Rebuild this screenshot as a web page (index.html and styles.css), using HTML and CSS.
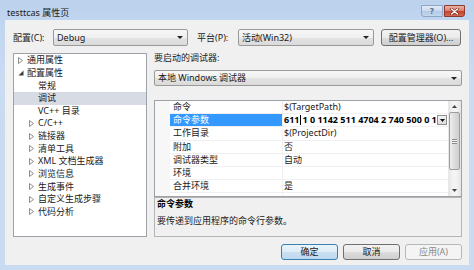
FILE: index.html
```html
<!DOCTYPE html>
<html>
<head>
<meta charset="utf-8">
<title>testtcas 属性页</title>
<link rel="stylesheet" href="styles.css">
</head>
<body>
<div class="window">
  <div class="titlebar">
    <span class="title">testtcas 属性页</span>
    <div class="caption">
      <span class="cap-btn cap-help">?</span>
      <span class="cap-btn cap-close"><svg width="9" height="7" viewBox="0 0 9 7"><path d="M1.5 1L7.5 6M7.5 1L1.5 6" stroke="#6b2a22" stroke-width="2.6" stroke-linecap="round"/><path d="M1.5 1L7.5 6M7.5 1L1.5 6" stroke="#fff" stroke-width="1.4" stroke-linecap="round"/></svg></span>
    </div>
  </div>
  <div class="client">
    <div class="toolbar">
      <span class="lbl lbl-config">配置(C):</span>
      <div class="combo combo-config"><span>Debug</span><svg class="arrow" width="6" height="3" viewBox="0 0 6 3"><path d="M0 0H6L3 3Z" fill="#222"/></svg></div>
      <span class="lbl lbl-platform">平台(P):</span>
      <div class="combo combo-platform"><span>活动(Win32)</span><svg class="arrow" width="6" height="3" viewBox="0 0 6 3"><path d="M0 0H6L3 3Z" fill="#222"/></svg></div>
      <button class="btn btn-manager">配置管理器(O)...</button>
    </div>
    <div class="main">
      <div class="tree">
        <div class="node lv0"><span class="toggle"><svg width="5" height="7" viewBox="0 0 5 7"><path d="M0.5 0.5L4.5 3.5L0.5 6.5Z" fill="#fff" stroke="#8c8c8c"/></svg></span>通用属性</div>
        <div class="node lv0"><span class="toggle"><svg width="6" height="6" viewBox="0 0 6 6"><path d="M5.5 0.5V5.5H0.5Z" fill="#3c3c3c"/></svg></span>配置属性</div>
        <div class="node lv1"><span class="toggle"></span>常规</div>
        <div class="node lv1 selected"><span class="toggle"></span>调试</div>
        <div class="node lv1"><span class="toggle"></span>VC++ 目录</div>
        <div class="node lv1"><span class="toggle"><svg width="5" height="7" viewBox="0 0 5 7"><path d="M0.5 0.5L4.5 3.5L0.5 6.5Z" fill="#fff" stroke="#8c8c8c"/></svg></span>C/C++</div>
        <div class="node lv1"><span class="toggle"><svg width="5" height="7" viewBox="0 0 5 7"><path d="M0.5 0.5L4.5 3.5L0.5 6.5Z" fill="#fff" stroke="#8c8c8c"/></svg></span>链接器</div>
        <div class="node lv1"><span class="toggle"><svg width="5" height="7" viewBox="0 0 5 7"><path d="M0.5 0.5L4.5 3.5L0.5 6.5Z" fill="#fff" stroke="#8c8c8c"/></svg></span>清单工具</div>
        <div class="node lv1"><span class="toggle"><svg width="5" height="7" viewBox="0 0 5 7"><path d="M0.5 0.5L4.5 3.5L0.5 6.5Z" fill="#fff" stroke="#8c8c8c"/></svg></span>XML 文档生成器</div>
        <div class="node lv1"><span class="toggle"><svg width="5" height="7" viewBox="0 0 5 7"><path d="M0.5 0.5L4.5 3.5L0.5 6.5Z" fill="#fff" stroke="#8c8c8c"/></svg></span>浏览信息</div>
        <div class="node lv1"><span class="toggle"><svg width="5" height="7" viewBox="0 0 5 7"><path d="M0.5 0.5L4.5 3.5L0.5 6.5Z" fill="#fff" stroke="#8c8c8c"/></svg></span>生成事件</div>
        <div class="node lv1"><span class="toggle"><svg width="5" height="7" viewBox="0 0 5 7"><path d="M0.5 0.5L4.5 3.5L0.5 6.5Z" fill="#fff" stroke="#8c8c8c"/></svg></span>自定义生成步骤</div>
        <div class="node lv1"><span class="toggle"><svg width="5" height="7" viewBox="0 0 5 7"><path d="M0.5 0.5L4.5 3.5L0.5 6.5Z" fill="#fff" stroke="#8c8c8c"/></svg></span>代码分析</div>
      </div>
      <div class="right">
        <div class="right-label">要启动的调试器:</div>
        <div class="combo combo-debugger"><span>本地 Windows 调试器</span><svg class="arrow" width="6" height="3" viewBox="0 0 6 3"><path d="M0 0H6L3 3Z" fill="#222"/></svg></div>
        <div class="grid">
          <div class="rows">
            <div class="row"><div class="gutter"></div><div class="name">命令</div><div class="value">$(TargetPath)</div></div>
            <div class="row"><div class="gutter"></div><div class="name sel">命令参数</div><div class="value editor"><span class="edit-text">611<i class="caret"></i>1 0 1142 511 4704 2 740 500 0 1</span><span class="dd"><svg width="5" height="3" viewBox="0 0 5 3"><path d="M0 0H5L2.5 3Z" fill="#111"/></svg></span></div></div>
            <div class="row"><div class="gutter"></div><div class="name">工作目录</div><div class="value">$(ProjectDir)</div></div>
            <div class="row"><div class="gutter"></div><div class="name">附加</div><div class="value">否</div></div>
            <div class="row"><div class="gutter"></div><div class="name">调试器类型</div><div class="value">自动</div></div>
            <div class="row"><div class="gutter"></div><div class="name">环境</div><div class="value"></div></div>
            <div class="row"><div class="gutter"></div><div class="name">合并环境</div><div class="value">是</div></div>
            <div class="row"><div class="gutter"></div><div class="name"></div><div class="value"></div></div>
          </div>
          <div class="scrollbar">
            <div class="sb-btn"><svg width="5" height="3" viewBox="0 0 5 3"><path d="M0 3H5L2.5 0Z" fill="#444"/></svg></div>
            <div class="sb-thumb"><span class="grip"></span></div>
            <div class="sb-track"></div>
            <div class="sb-btn"><svg width="5" height="3" viewBox="0 0 5 3"><path d="M0 0H5L2.5 3Z" fill="#444"/></svg></div>
          </div>
        </div>
        <div class="desc">
          <div class="desc-title">命令参数</div>
          <div class="desc-text">要传递到应用程序的命令行参数。</div>
        </div>
      </div>
    </div>
    <div class="footer">
      <button class="btn btn-action btn-default">确定</button>
      <button class="btn btn-action">取消</button>
      <button class="btn btn-action btn-disabled" disabled>应用(A)</button>
    </div>
  </div>
</div>
</body>
</html>
```

FILE: styles.css
```css
* { box-sizing: border-box; }
html, body { margin: 0; padding: 0; }
body {
  width: 474px;
  height: 270px;
  overflow: hidden;
  font-family: "Noto Sans", "Noto Sans CJK SC", sans-serif;
  font-size: 9px;
  color: #1a1a1a;
}
.window {
  width: 474px;
  height: 270px;
  display: flex;
  flex-direction: column;
  background: linear-gradient(#bcd2ed, #cadcf2 30%, #c9dbf1 100%);
}
.titlebar {
  height: 20px;
  display: flex;
  align-items: flex-start;
  justify-content: space-between;
  padding: 5px 9px 0 7px;
}
.title { line-height: 15px; color: #1b1b1b; }
.caption { display: flex; gap: 1px; }
.cap-btn {
  height: 12px;
  display: flex;
  align-items: center;
  justify-content: center;
}
.cap-help {
  width: 22px;
  border: 1px solid #8ea5c5;
  border-radius: 0 0 0 3px;
  background: linear-gradient(#e2ecf8, #c8d9ee 50%, #b4c9e6 51%, #c3d6ee);
  color: #4d6383;
  font-weight: bold;
  font-size: 8px;
  line-height: 10px;
}
.cap-close {
  width: 21px;
  border: 1px solid #8a3a30;
  border-radius: 0 0 3px 0;
  background: linear-gradient(#eab3a5, #dc7d69 50%, #c8402c 51%, #d5664f);
}
.client {
  flex: 1;
  margin: 0 5px 5px 5px;
  background: #f0f0f0;
  display: flex;
  flex-direction: column;
  padding: 9px 7px 5px 8px;
}
.toolbar {
  height: 17px;
  display: flex;
  align-items: center;
}
.lbl { line-height: 12px; white-space: nowrap; }
.lbl-config { width: 40px; }
.lbl-platform { width: 41px; margin-left: 9px; }
.combo {
  height: 17px;
  border: 1px solid #9a9a9a;
  border-radius: 2px;
  background: linear-gradient(#f7f7f7, #efefef 50%, #e3e3e3 51%, #dadada);
  display: flex;
  align-items: center;
  justify-content: space-between;
  padding: 0 4px 0 3px;
  line-height: 12px;
  white-space: nowrap;
}
.combo-config { width: 135px; }
.combo-platform { width: 136px; }
.btn {
  height: 17px;
  border: 1px solid #707070;
  border-radius: 3px;
  background: linear-gradient(#f2f2f2, #ebebeb 50%, #dddddd 51%, #cfcfcf);
  font-family: inherit;
  font-size: 9px;
  color: #1a1a1a;
  padding: 0;
  line-height: 12px;
  white-space: nowrap;
}
.btn-manager { width: 80px; margin-left: 7px; }
.main {
  margin-top: 7px;
  height: 184px;
  display: flex;
  gap: 7px;
}
.tree {
  width: 134px;
  border: 1px solid #9da2a9;
  background: #fff;
  padding-top: 0;
}
.node {
  height: 12.64px;
  display: flex;
  align-items: center;
  line-height: 12px;
  white-space: nowrap;
}
.node.selected { background: #d7dbe3; }
.lv0 { padding-left: 3px; }
.lv1 { padding-left: 14px; }
.toggle {
  width: 7px;
  height: 7px;
  margin-right: 3px;
  display: flex;
  align-items: center;
  justify-content: center;
}
.right {
  flex: 1;
  display: flex;
  flex-direction: column;
}
.right-label { line-height: 10px; height: 10px; }
.combo-debugger { margin-top: 7px; height: 16px; }
.grid {
  margin-top: 14px;
  height: 97px;
  border: 1px solid #9da2a9;
  background: #fff;
  display: flex;
  overflow: hidden;
}
.rows { flex: 1; overflow: hidden; }
.row {
  display: flex;
  height: 13.2px;
  line-height: 12px;
  white-space: nowrap;
}
.gutter { width: 15px; background: #f7f7f7; }
.name {
  width: 113px;
  padding-left: 3px;
  border-right: 1px solid #f0f0f0;
  border-bottom: 1px solid #f0f0f0;
  display: flex;
  align-items: center;
}
.name.sel { background: #3399ff; color: #fff; }
.value {
  flex: 1;
  padding-left: 1px;
  border-bottom: 1px solid #f0f0f0;
  display: flex;
  align-items: center;
  overflow: hidden;
}
.editor { padding-right: 1px; }
.edit-text {
  flex: 1;
  overflow: hidden;
  font-weight: bold;
  color: #000;
  white-space: pre;
}
.caret {
  display: inline-block;
  width: 1px;
  height: 10px;
  margin: 0 1px 0 1px;
  background: #000;
  vertical-align: -2px;
}
.dd {
  width: 10px;
  height: 10px;
  border: 1px solid #8f8f8f;
  background: linear-gradient(#f4f4f4, #dcdcdc);
  display: flex;
  align-items: center;
  justify-content: center;
}
.scrollbar {
  width: 13px;
  background: linear-gradient(90deg, #e6e6e6, #f4f4f4 40%, #f4f4f4 60%, #e6e6e6);
  display: flex;
  flex-direction: column;
}
.sb-btn {
  height: 11px;
  display: flex;
  align-items: center;
  justify-content: center;
}
.sb-thumb {
  height: 58px;
  margin: 0 1px;
  border: 1px solid #9d9d9d;
  border-radius: 2px;
  background: linear-gradient(90deg, #eeeeee, #dcdcdc 50%, #cfcfcf);
  display: flex;
  align-items: center;
  justify-content: center;
}
.grip {
  width: 5px;
  height: 5px;
  border-top: 1px solid #8c8c8c;
  border-bottom: 1px solid #8c8c8c;
  background: linear-gradient(#f0f0f0 40%, #8c8c8c 40%, #8c8c8c 60%, #f0f0f0 60%);
}
.sb-track { flex: 1; }
.desc {
  height: 40px;
  border: 1px solid #b4b4b4;
  background: #f0f0f0;
  padding: 0 2px;
}
.desc-title { font-weight: bold; line-height: 12px; color: #000; }
.desc-text { margin-top: 5px; line-height: 12px; }
.footer {
  margin-top: 7px;
  height: 16px;
  display: flex;
  justify-content: flex-end;
  gap: 5px;
}
.btn-action { width: 57px; height: 16px; }
.btn-default {
  border-color: #3c7fb1;
  background: linear-gradient(#eaf4fb, #dcebf6 50%, #c9e0f1 51%, #bcd8ee);
}
.btn-disabled {
  border-color: #b5b8bb;
  background: #f4f4f4;
  color: #8a8a8a;
}
```
